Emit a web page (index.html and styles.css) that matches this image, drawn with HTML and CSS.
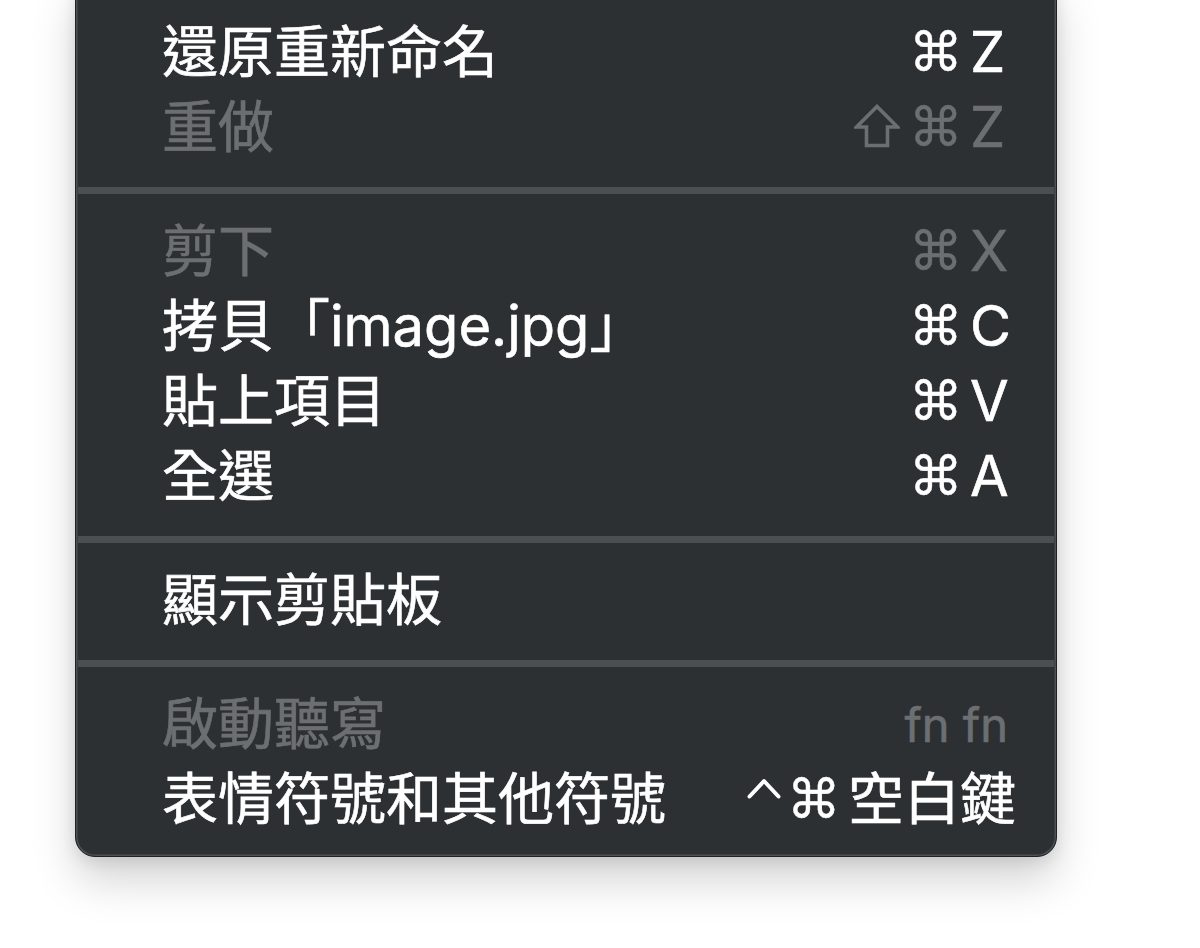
FILE: index.html
```html
<!DOCTYPE html>
<html lang="zh-Hant">
<head>
<meta charset="utf-8">
<title>編輯選單</title>
<link rel="stylesheet" href="styles.css">
</head>
<body>
<div class="stage">
  <div class="menu">
    <div class="item"><span class="label">還原重新命名</span><span class="shortcut"><span class="cmd">⌘</span><span class="key">Z</span></span></div>
    <div class="item disabled"><span class="label">重做</span><span class="shortcut"><svg class="shift" viewBox="0 0 46 44" width="46" height="44" aria-label="⇧"><path d="M23 2.5 L43.5 23 L33.5 23 L33.5 41.5 L12.5 41.5 L12.5 23 L2.5 23 Z" fill="none" stroke="currentColor" stroke-width="3.6" stroke-linejoin="miter"/></svg><span class="cmd">⌘</span><span class="key">Z</span></span></div>
    <div class="sep"><div class="sep-line"></div></div>
    <div class="item disabled"><span class="label">剪下</span><span class="shortcut"><span class="cmd">⌘</span><span class="key">X</span></span></div>
    <div class="item"><span class="label">拷貝「image.jpg」</span><span class="shortcut"><span class="cmd">⌘</span><span class="key">C</span></span></div>
    <div class="item"><span class="label">貼上項目</span><span class="shortcut"><span class="cmd">⌘</span><span class="key">V</span></span></div>
    <div class="item"><span class="label">全選</span><span class="shortcut"><span class="cmd">⌘</span><span class="key">A</span></span></div>
    <div class="sep"><div class="sep-line"></div></div>
    <div class="item"><span class="label">顯示剪貼板</span></div>
    <div class="sep"><div class="sep-line"></div></div>
    <div class="item disabled"><span class="label">啟動聽寫</span><span class="shortcut"><span class="key fn">fn fn</span></span></div>
    <div class="item"><span class="label">表情符號和其他符號</span><span class="shortcut"><svg class="ctrl" viewBox="0 0 34 22" width="34" height="22" aria-label="⌃"><path d="M2.5 19.5 L17 4 L31.5 19.5" fill="none" stroke="currentColor" stroke-width="4" stroke-linecap="round" stroke-linejoin="round"/></svg><span class="cmd">⌘</span><span class="key wide">空白鍵</span></span></div>
  </div>
</div>
</body>
</html>
```

FILE: styles.css
```css
html, body {
  margin: 0;
  padding: 0;
  background: #ffffff;
}

body {
  font-family: Inter, "Noto Sans CJK TC", "DejaVu Sans", sans-serif;
  overflow: hidden;
  height: 948px;
}

.stage {
  padding-left: 75px;
  width: 982px;
}

.menu {
  box-sizing: border-box;
  width: 982px;
  margin-top: -20px;
  padding: 34px 44px 19px 86px;
  background: #2d3033;
  border: 1px solid #1f2123;
  border-radius: 0 0 20px 20px;
  box-shadow:
    inset 0 0 0 1.5px #4d5053,
    0 24px 44px rgba(0, 0, 0, 0.17),
    0 4px 16px rgba(0, 0, 0, 0.10);
}

.item {
  display: flex;
  align-items: center;
  height: 75px;
  line-height: 75px;
  font-size: 56px;
  color: #ffffff;
  white-space: nowrap;
  -webkit-text-stroke: 0.6px currentColor;
}

.item.disabled {
  color: #6c6f72;
}

.label {
  flex: 1;
}

.shortcut {
  display: flex;
  align-items: center;
  height: 75px;
}

.cmd {
  font-family: "DejaVu Sans", sans-serif;
  font-size: 54px;
  line-height: 75px;
  margin-right: 7px;
  -webkit-text-stroke: 0.4px currentColor;
}

.shift {
  margin-right: 9px;
  margin-top: -4px;
}

.ctrl {
  align-self: flex-start;
  margin-top: 15px;
  margin-right: 6px;
}

.key {
  min-width: 42px;
  text-align: left;
}

.key.wide {
  margin-left: 0;
  margin-right: -4px;
}

.key.fn {
  font-size: 47px;
  margin-right: 4px;
}

.sep {
  height: 49px;
  box-sizing: border-box;
  padding-top: 22px;
  margin: 0 -42px 0 -84px;
}

.sep-line {
  height: 7px;
  background: #4b4f52;
}
```
